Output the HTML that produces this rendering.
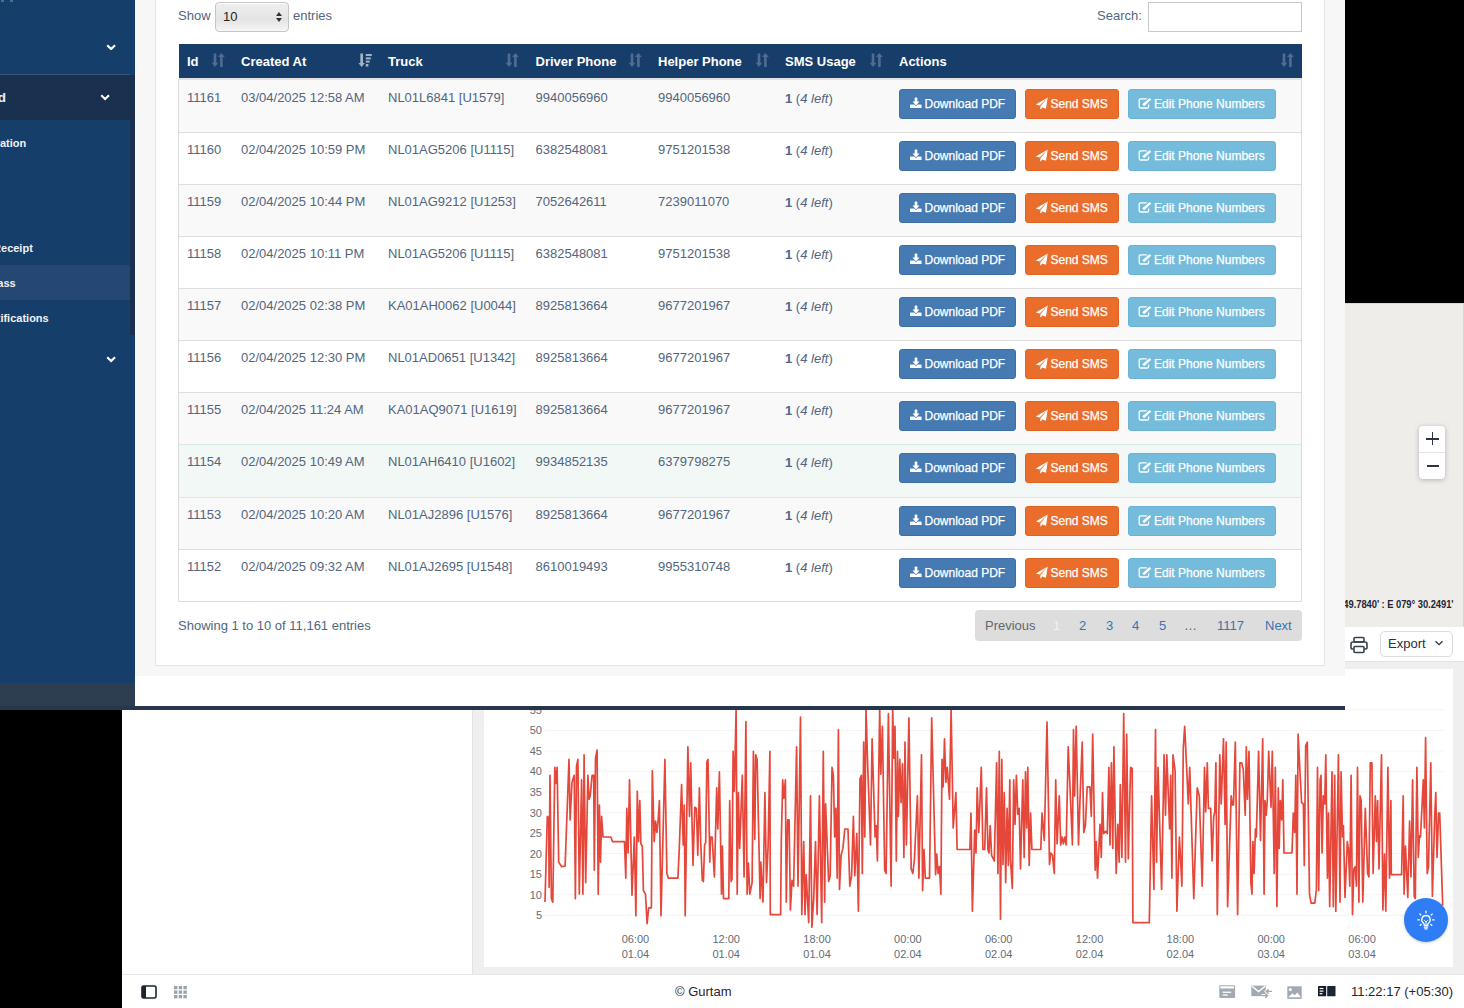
<!DOCTYPE html>
<html><head><meta charset="utf-8"><style>
*{margin:0;padding:0;box-sizing:border-box}
html,body{width:1464px;height:1008px;overflow:hidden;background:#000;font-family:"Liberation Sans",sans-serif}
.a{position:absolute}
.t{position:absolute;white-space:nowrap;line-height:1}
</style></head>
<body>
<div class="a" style="left:122px;top:303px;width:1342px;height:705px;background:#fff"></div>
<div class="a" style="left:1345px;top:303px;width:119px;height:324px;background:#eeede9;border-top:1px solid #d8d6d0"></div>
<div class="a" style="left:1463px;top:303px;width:1px;height:324px;background:#d9d8d4"></div>
<div class="a" style="left:1419px;top:426px;width:26px;height:53px;background:#fff;border-radius:4px;box-shadow:0 1px 5px rgba(0,0,0,.25)"></div>
<div class="a" style="left:1419px;top:452px;width:26px;height:1px;background:#e6e6e6"></div>
<div class="a" style="left:1426px;top:438px;width:13px;height:1.6px;background:#2b3440"></div>
<div class="a" style="left:1431.7px;top:432px;width:1.6px;height:13px;background:#2b3440"></div>
<div class="a" style="left:1427px;top:465px;width:12px;height:2px;background:#2b3440"></div>
<div class="t" style="right:10.5px;top:600px;font-size:10.2px;font-weight:bold;color:#1d2633;letter-spacing:-0.05px;transform:scaleX(0.92);transform-origin:right center">N 049° 49.7840' : E 079° 30.2491'</div>
<div class="a" style="left:1345px;top:627px;width:119px;height:35px;background:#fff;border-bottom:1px solid #e2e2e2"></div>
<svg class="a" style="left:1349px;top:635px" width="20" height="20" viewBox="0 0 20 20" fill="none" stroke="#3a4250" stroke-width="1.6">
<rect x="5" y="2.5" width="10" height="4.5" rx="1"/><path d="M4.5 14H3.5a1.5 1.5 0 0 1-1.5-1.5V9a2 2 0 0 1 2-2h12a2 2 0 0 1 2 2v3.5a1.5 1.5 0 0 1-1.5 1.5H15.5"/><rect x="5" y="11.5" width="10" height="6" rx="1"/></svg>
<div class="a" style="left:1380px;top:631px;width:73px;height:26px;border:1px solid #d9dbe0;border-radius:5px;background:#fff"></div>
<div class="t" style="left:1388px;top:637px;font-size:13px;color:#2a3039">Export</div>
<svg class="a" style="left:1434px;top:639px" width="10" height="8" viewBox="0 0 10 8"><path d="M1.5 2.2 5 5.6 8.5 2.2" fill="none" stroke="#2a3039" stroke-width="1.3"/></svg>
<div class="a" style="left:472px;top:662px;width:992px;height:312px;background:#efefef"></div>
<div class="a" style="left:472px;top:662px;width:1px;height:312px;background:#e2e2e2"></div>
<div class="a" style="left:484px;top:669px;width:969px;height:298px;background:#fff"></div>
<div class="a" style="left:122px;top:974px;width:1342px;height:34px;background:#fff;border-top:1px solid #e6e7ea"></div>
<svg class="a" style="left:0;top:0" width="1464" height="1008" viewBox="0 0 1464 1008"><rect x="545" y="914.80" width="898" height="1" fill="#f3f3f3"/><rect x="545" y="894.25" width="898" height="1" fill="#f3f3f3"/><rect x="545" y="873.70" width="898" height="1" fill="#f3f3f3"/><rect x="545" y="853.15" width="898" height="1" fill="#f3f3f3"/><rect x="545" y="832.60" width="898" height="1" fill="#f3f3f3"/><rect x="545" y="812.05" width="898" height="1" fill="#f3f3f3"/><rect x="545" y="791.50" width="898" height="1" fill="#f3f3f3"/><rect x="545" y="770.95" width="898" height="1" fill="#f3f3f3"/><rect x="545" y="750.40" width="898" height="1" fill="#f3f3f3"/><rect x="545" y="729.85" width="898" height="1" fill="#f3f3f3"/><rect x="545" y="709.30" width="898" height="1" fill="#f3f3f3"/><text x="542" y="919.30" text-anchor="end" font-family="Liberation Sans" font-size="11" fill="#666c76">5</text><text x="542" y="898.75" text-anchor="end" font-family="Liberation Sans" font-size="11" fill="#666c76">10</text><text x="542" y="878.20" text-anchor="end" font-family="Liberation Sans" font-size="11" fill="#666c76">15</text><text x="542" y="857.65" text-anchor="end" font-family="Liberation Sans" font-size="11" fill="#666c76">20</text><text x="542" y="837.10" text-anchor="end" font-family="Liberation Sans" font-size="11" fill="#666c76">25</text><text x="542" y="816.55" text-anchor="end" font-family="Liberation Sans" font-size="11" fill="#666c76">30</text><text x="542" y="796.00" text-anchor="end" font-family="Liberation Sans" font-size="11" fill="#666c76">35</text><text x="542" y="775.45" text-anchor="end" font-family="Liberation Sans" font-size="11" fill="#666c76">40</text><text x="542" y="754.90" text-anchor="end" font-family="Liberation Sans" font-size="11" fill="#666c76">45</text><text x="542" y="734.35" text-anchor="end" font-family="Liberation Sans" font-size="11" fill="#666c76">50</text><text x="542" y="713.80" text-anchor="end" font-family="Liberation Sans" font-size="11" fill="#666c76">55</text><text x="635.40" y="943" text-anchor="middle" font-family="Liberation Sans" font-size="11" fill="#666c76">06:00</text><text x="635.40" y="958" text-anchor="middle" font-family="Liberation Sans" font-size="11" fill="#666c76">01.04</text><text x="726.23" y="943" text-anchor="middle" font-family="Liberation Sans" font-size="11" fill="#666c76">12:00</text><text x="726.23" y="958" text-anchor="middle" font-family="Liberation Sans" font-size="11" fill="#666c76">01.04</text><text x="817.06" y="943" text-anchor="middle" font-family="Liberation Sans" font-size="11" fill="#666c76">18:00</text><text x="817.06" y="958" text-anchor="middle" font-family="Liberation Sans" font-size="11" fill="#666c76">01.04</text><text x="907.89" y="943" text-anchor="middle" font-family="Liberation Sans" font-size="11" fill="#666c76">00:00</text><text x="907.89" y="958" text-anchor="middle" font-family="Liberation Sans" font-size="11" fill="#666c76">02.04</text><text x="998.72" y="943" text-anchor="middle" font-family="Liberation Sans" font-size="11" fill="#666c76">06:00</text><text x="998.72" y="958" text-anchor="middle" font-family="Liberation Sans" font-size="11" fill="#666c76">02.04</text><text x="1089.55" y="943" text-anchor="middle" font-family="Liberation Sans" font-size="11" fill="#666c76">12:00</text><text x="1089.55" y="958" text-anchor="middle" font-family="Liberation Sans" font-size="11" fill="#666c76">02.04</text><text x="1180.38" y="943" text-anchor="middle" font-family="Liberation Sans" font-size="11" fill="#666c76">18:00</text><text x="1180.38" y="958" text-anchor="middle" font-family="Liberation Sans" font-size="11" fill="#666c76">02.04</text><text x="1271.21" y="943" text-anchor="middle" font-family="Liberation Sans" font-size="11" fill="#666c76">00:00</text><text x="1271.21" y="958" text-anchor="middle" font-family="Liberation Sans" font-size="11" fill="#666c76">03.04</text><text x="1362.04" y="943" text-anchor="middle" font-family="Liberation Sans" font-size="11" fill="#666c76">06:00</text><text x="1362.04" y="958" text-anchor="middle" font-family="Liberation Sans" font-size="11" fill="#666c76">03.04</text><path d="M545.0 902.1 L547.3 816.4 L548.7 817.6 L549.1 887.2 L550.0 775.3 L551.4 898.6 L552.8 902.1 L554.8 767.4 L556.0 783.3 L557.1 767.4 L558.7 862.1 L561.7 866.7 L565.1 866.2 L569.0 759.4 L570.1 819.9 L572.0 782.2 L574.2 775.3 L575.4 898.6 L576.5 766.2 L577.9 759.4 L579.3 894.1 L581.6 779.9 L582.9 894.1 L584.1 754.8 L585.7 882.6 L587.9 775.3 L589.1 799.3 L590.2 795.9 L592.1 775.3 L593.7 775.3 L594.3 870.1 L595.5 758.2 L597.1 750.2 L598.2 894.1 L599.4 805.0 L600.5 862.1 L601.6 816.4 L603.0 837.0 L610.8 837.0 L612.6 841.6 L624.5 841.6 L625.8 878.1 L626.8 808.4 L628.1 853.0 L629.5 779.9 L632.0 895.2 L634.3 837.0 L635.9 915.8 L637.3 791.3 L638.6 841.6 L639.8 800.5 L640.9 843.8 L642.3 846.1 L643.4 890.6 L645.5 894.1 L647.1 923.7 L648.7 907.8 L651.4 907.8 L652.3 770.8 L654.2 841.6 L655.5 821.0 L656.9 832.4 L658.3 818.7 L659.4 800.5 L661.0 915.8 L664.9 759.4 L666.9 873.5 L668.3 878.1 L677.9 878.1 L679.3 848.4 L681.6 784.5 L683.2 845.0 L684.3 805.0 L685.2 915.8 L687.9 746.8 L689.5 816.4 L690.7 762.8 L693.0 865.5 L694.8 807.3 L696.4 808.4 L697.8 855.3 L699.4 787.9 L700.7 841.6 L702.3 880.4 L703.4 881.5 L704.6 845.0 L705.7 842.7 L706.9 761.6 L708.0 759.4 L709.8 862.1 L710.5 837.0 L712.1 837.0 L714.4 876.9 L716.7 787.9 L717.8 829.0 L719.4 771.9 L721.5 894.1 L722.4 846.1 L723.5 898.6 L728.8 898.6 L729.7 800.5 L731.1 881.5 L732.0 879.2 L733.1 751.4 L734.3 791.3 L736.1 710.3 L737.2 894.1 L738.4 792.5 L739.7 848.4 L742.3 775.3 L744.1 876.9 L745.9 721.7 L747.1 894.1 L748.4 863.2 L749.8 894.1 L752.1 882.6 L753.4 751.4 L754.8 839.3 L755.7 754.8 L757.1 759.4 L760.1 898.6 L760.8 862.1 L763.0 902.1 L764.9 792.5 L766.5 882.6 L768.1 846.1 L769.9 751.4 L770.3 914.6 L780.6 914.6 L781.3 841.6 L782.7 779.9 L783.8 798.2 L785.4 779.9 L786.3 902.1 L787.7 819.9 L789.1 819.9 L790.4 910.0 L792.0 880.4 L793.6 886.1 L796.6 746.8 L798.0 886.1 L800.5 717.1 L801.8 914.6 L803.7 841.6 L805.0 914.6 L806.2 874.7 L808.7 922.6 L810.5 795.9 L811.9 927.2 L813.7 898.6 L815.5 841.6 L817.1 914.6 L819.4 795.9 L821.7 922.6 L823.3 751.4 L824.7 902.1 L825.6 803.9 L828.6 881.5 L830.2 875.8 L832.0 767.4 L833.4 775.3 L834.7 837.0 L835.9 808.4 L837.2 878.1 L838.4 729.7 L839.5 889.5 L841.1 855.3 L842.9 848.4 L844.8 829.0 L848.0 829.0 L849.8 886.1 L851.6 875.8 L853.4 816.4 L854.8 875.8 L856.8 833.6 L858.4 911.2 L860.0 778.8 L861.4 775.3 L862.3 873.5 L863.7 742.2 L864.8 837.0 L866.0 709.1 L867.8 768.5 L870.5 845.0 L872.1 738.8 L875.1 837.0 L876.3 825.6 L877.4 861.0 L879.7 709.1 L880.8 774.2 L882.4 726.3 L884.7 870.1 L886.1 873.5 L888.4 713.7 L891.1 886.1 L892.7 709.1 L893.8 758.2 L895.0 726.3 L896.3 861.0 L897.5 751.4 L898.4 816.4 L899.8 759.4 L901.1 802.7 L902.5 763.9 L903.9 857.5 L905.0 742.2 L906.4 845.0 L908.9 717.8 L911.2 868.9 L912.8 873.5 L914.4 859.8 L917.4 795.9 L918.9 878.1 L921.5 754.8 L922.6 890.6 L924.0 849.5 L925.3 878.1 L929.5 878.1 L931.7 717.8 L935.6 874.7 L936.8 854.1 L938.1 873.5 L939.5 866.7 L940.9 894.1 L942.0 759.4 L943.2 786.8 L944.5 738.8 L945.9 782.2 L947.3 767.4 L949.5 799.3 L951.1 709.1 L953.2 827.9 L955.9 792.5 L957.1 849.5 L969.9 849.5 L971.0 813.0 L972.4 911.2 L974.7 830.1 L976.0 853.0 L977.2 787.9 L978.8 832.4 L981.3 767.4 L982.9 849.5 L984.7 849.5 L986.5 787.9 L987.9 849.5 L989.0 853.0 L990.2 825.6 L991.6 855.3 L994.3 861.0 L996.6 762.8 L997.9 873.5 L999.3 751.4 L1000.5 919.2 L1001.8 759.4 L1003.0 864.4 L1004.3 792.5 L1005.7 882.6 L1007.1 808.4 L1008.4 865.5 L1009.8 779.9 L1010.5 859.8 L1012.3 888.4 L1013.7 779.9 L1015.0 824.4 L1016.4 775.3 L1017.8 814.2 L1019.2 808.4 L1020.5 868.9 L1022.8 779.9 L1024.2 857.5 L1025.5 771.9 L1026.7 827.9 L1027.8 767.4 L1029.2 865.5 L1030.6 813.0 L1031.9 849.5 L1040.8 849.5 L1042.0 813.0 L1044.3 840.4 L1047.0 722.1 L1049.5 864.4 L1050.7 853.0 L1052.5 855.3 L1054.3 873.5 L1055.7 779.9 L1057.1 843.8 L1059.3 795.9 L1060.7 845.0 L1062.1 837.0 L1063.4 843.8 L1064.8 837.0 L1066.2 845.0 L1068.2 746.8 L1070.1 789.0 L1072.4 845.0 L1073.5 729.7 L1074.6 795.9 L1076.2 726.3 L1078.5 845.0 L1080.3 791.3 L1082.2 742.2 L1083.8 832.4 L1085.4 825.6 L1087.2 786.8 L1089.9 786.8 L1091.3 816.4 L1092.7 734.2 L1095.2 870.1 L1096.3 841.6 L1097.5 878.1 L1100.0 824.4 L1101.3 857.5 L1102.5 792.5 L1103.6 833.6 L1105.5 831.3 L1107.3 833.6 L1108.9 767.4 L1110.0 845.0 L1111.4 762.8 L1112.8 848.4 L1113.9 746.8 L1116.2 873.5 L1117.8 824.4 L1119.2 862.1 L1120.3 784.5 L1121.9 857.5 L1123.7 713.7 L1125.5 862.1 L1126.7 734.2 L1128.3 858.7 L1130.6 767.4 L1132.2 768.5 L1132.9 922.6 L1149.3 922.6 L1151.6 795.9 L1153.9 889.5 L1155.5 729.7 L1156.6 862.1 L1158.0 767.4 L1161.6 889.5 L1164.1 754.8 L1165.5 815.3 L1166.8 754.8 L1169.6 829.0 L1170.7 775.3 L1171.9 878.1 L1173.0 754.8 L1175.1 770.8 L1176.9 911.2 L1179.4 837.0 L1181.9 886.1 L1183.3 747.9 L1184.7 726.3 L1188.3 803.9 L1189.7 767.4 L1193.8 898.6 L1197.2 787.9 L1199.3 795.9 L1202.2 886.1 L1204.5 767.4 L1205.7 811.9 L1207.3 762.8 L1208.4 808.4 L1210.7 808.4 L1212.1 861.0 L1213.7 816.4 L1214.8 811.9 L1215.9 762.8 L1217.3 914.6 L1219.8 754.8 L1221.2 803.9 L1223.5 738.8 L1225.1 824.4 L1226.2 742.2 L1227.6 906.6 L1231.2 795.9 L1232.4 805.0 L1233.5 805.0 L1235.3 742.2 L1237.6 914.6 L1239.9 762.8 L1241.7 762.8 L1243.3 769.6 L1245.2 815.3 L1246.3 746.8 L1247.4 799.3 L1249.0 751.4 L1250.9 882.6 L1252.0 894.1 L1252.9 841.6 L1254.1 873.5 L1255.4 829.0 L1256.3 837.0 L1258.6 751.4 L1260.5 840.4 L1262.7 738.8 L1264.1 894.1 L1265.0 800.5 L1266.2 815.3 L1267.3 800.5 L1268.7 751.4 L1271.0 807.3 L1272.3 751.4 L1274.2 873.5 L1275.3 767.4 L1276.9 906.6 L1278.3 787.9 L1279.2 848.4 L1280.3 800.5 L1281.7 819.9 L1282.8 779.9 L1284.0 853.0 L1292.0 853.0 L1293.3 813.0 L1294.7 832.4 L1295.8 775.3 L1297.0 894.1 L1298.1 734.2 L1299.7 766.2 L1301.6 802.7 L1303.4 803.9 L1304.3 865.5 L1305.7 745.7 L1307.3 742.2 L1309.5 894.1 L1311.1 903.2 L1314.8 903.2 L1316.4 889.5 L1317.5 767.4 L1318.7 890.6 L1320.1 779.9 L1321.0 775.3 L1322.1 853.0 L1323.3 795.9 L1324.7 803.9 L1325.8 754.8 L1327.4 878.1 L1328.5 813.0 L1329.7 906.6 L1332.0 771.9 L1333.3 906.6 L1334.7 775.3 L1335.8 911.2 L1338.4 754.8 L1340.0 902.1 L1341.1 771.9 L1342.5 837.0 L1343.4 825.6 L1345.0 897.5 L1347.3 841.6 L1348.4 848.4 L1349.8 886.1 L1351.1 775.3 L1352.5 914.6 L1353.9 868.9 L1355.3 866.7 L1356.4 886.1 L1357.5 767.4 L1358.9 902.1 L1360.0 795.9 L1361.2 800.5 L1362.8 902.1 L1365.3 808.4 L1367.6 873.5 L1368.9 876.9 L1370.3 762.8 L1371.9 762.8 L1373.1 873.5 L1375.3 795.9 L1376.5 841.6 L1377.6 800.5 L1379.0 868.9 L1381.5 754.8 L1382.9 910.0 L1384.5 854.1 L1385.8 911.2 L1387.9 767.4 L1389.5 878.1 L1390.9 800.5 L1391.3 874.7 L1401.6 874.7 L1403.2 795.9 L1404.1 894.1 L1405.5 846.1 L1407.8 897.5 L1409.6 821.0 L1411.0 876.9 L1412.6 779.9 L1414.2 896.3 L1415.3 898.6 L1416.9 767.4 L1418.3 857.5 L1419.4 835.8 L1420.5 837.0 L1423.3 779.9 L1424.4 827.9 L1425.6 737.7 L1427.2 873.5 L1428.5 866.7 L1430.8 762.8 L1432.4 896.3 L1434.7 816.4 L1435.8 792.5 L1437.0 857.5 L1438.6 813.0 L1439.7 813.0 L1442.7 905.5" fill="none" stroke="#e5473a" stroke-width="1.7" stroke-linejoin="round"/></svg>
<div class="a" style="left:1404px;top:898px;width:44px;height:44px;border-radius:50%;background:#2f7df4;box-shadow:0 1px 3px rgba(0,0,0,.2)"></div>
<svg class="a" style="left:1414px;top:907.5px" width="24" height="24" viewBox="0 0 24 24" fill="none" stroke="#fff" stroke-width="1.3" stroke-linecap="round"><path d="M12 7.5a4.2 4.2 0 0 0-2.6 7.5c.5.4.8 1 .8 1.6v.9h3.6v-.9c0-.6.3-1.2.8-1.6A4.2 4.2 0 0 0 12 7.5z"/><path d="M10.4 19.2h3.2M10.8 20.8h2.4"/><path d="M12 3.2v1.6M5.8 6l1.1 1.1M18.2 6l-1.1 1.1M3.8 11.8h1.6M18.6 11.8h1.6M6.2 17.3l1-.9M17.8 17.3l-1-.9"/><path d="M10.5 12.5l1.5 1.5 1.5-1.5M12 14v3" stroke-width="1"/></svg>
<svg class="a" style="left:141px;top:985px" width="16" height="14" viewBox="0 0 16 14"><rect x="1" y="1" width="14" height="12" rx="1.5" fill="none" stroke="#1c2433" stroke-width="1.6"/><rect x="1" y="1" width="4" height="12" fill="#1c2433"/></svg>
<svg class="a" style="left:174px;top:986px" width="14" height="13" viewBox="0 0 14 13" fill="#9ba1aa"><rect x="0.0" y="0.0" width="3.4" height="3.3"/><rect x="4.7" y="0.0" width="3.4" height="3.3"/><rect x="9.4" y="0.0" width="3.4" height="3.3"/><rect x="0.0" y="4.5" width="3.4" height="3.3"/><rect x="4.7" y="4.5" width="3.4" height="3.3"/><rect x="9.4" y="4.5" width="3.4" height="3.3"/><rect x="0.0" y="9.0" width="3.4" height="3.3"/><rect x="4.7" y="9.0" width="3.4" height="3.3"/><rect x="9.4" y="9.0" width="3.4" height="3.3"/></svg>
<div class="t" style="left:675px;top:985px;font-size:13px;color:#1f2633">© Gurtam</div>
<svg class="a" style="left:1219px;top:985px" width="17" height="14" viewBox="0 0 17 14"><rect x="0.3" y="0.2" width="15.8" height="12.9" rx="1" fill="#a3a9b2"/><rect x="1.3" y="1.3" width="13.8" height="2.2" rx="0.5" fill="#fff"/><rect x="3.7" y="6.6" width="8.5" height="1.3" fill="#fff"/><rect x="3.7" y="9.4" width="5" height="1.3" fill="#fff"/></svg>
<svg class="a" style="left:1250.5px;top:985px" width="22" height="14" viewBox="0 0 22 14"><rect x="0.3" y="0.6" width="14.5" height="10.5" fill="#a3a9b2"/><path d="M1 1.3 7.5 6.6 14.1 1.3" fill="none" stroke="#fff" stroke-width="1.4"/><path d="M21 6.4H15.8M17.6 4.3 15.3 6.4 17.6 8.5M10.6 10.6H16M14.2 8.5 16.5 10.6 14.2 12.7" fill="none" stroke="#fff" stroke-width="3"/><path d="M21 6.4H15.8M17.6 4.3 15.3 6.4 17.6 8.5M10.6 10.6H16M14.2 8.5 16.5 10.6 14.2 12.7" fill="none" stroke="#a3a9b2" stroke-width="1.4"/></svg>
<svg class="a" style="left:1287px;top:985.5px" width="15" height="13" viewBox="0 0 15 13"><rect x="0.3" y="0.3" width="14.4" height="12.6" fill="#a3a9b2"/><circle cx="3.3" cy="3.6" r="1.6" fill="#fff"/><path d="M1.2 11.2 5.4 7.3 7.8 9.2 10.4 6.5 13.8 11.2Z" fill="#fff"/></svg>
<svg class="a" style="left:1318px;top:986.3px" width="18" height="11" viewBox="0 0 18 11"><rect x="0" y="0" width="8.2" height="10.3" rx="0.6" fill="#151c29"/><rect x="9.2" y="0" width="8.3" height="10.3" rx="0.6" fill="#1c2433"/><rect x="1.6" y="1.9" width="3.8" height="1.2" fill="#fff"/><rect x="1.6" y="4.5" width="3.8" height="1.2" fill="#fff"/><rect x="1.6" y="7.1" width="2.8" height="1.2" fill="#fff"/></svg>
<div class="t" style="left:1351px;top:985px;font-size:13px;color:#1f2633">11:22:17 (+05:30)</div>
<div class="a" style="left:0;top:0;width:1345px;height:706px;background:#fff"></div>
<div class="a" style="left:0;top:706px;width:1345px;height:4px;background:#26374b"></div>
<div class="a" style="left:135px;top:0;width:1210px;height:676px;background:#f7f7f7"></div>
<div class="a" style="left:0;top:0;width:135px;height:683px;background:#163e6b"></div>
<div class="a" style="left:0;top:683px;width:135px;height:23px;background:#2e3e51"></div>
<div class="a" style="left:0;top:74px;width:130px;height:1px;background:#3b5778"></div>
<div class="a" style="left:0;top:75px;width:135px;height:45px;background:#19304f"></div>
<div class="a" style="left:130px;top:120px;width:5px;height:215px;background:#19304f"></div>
<div class="a" style="left:0;top:265px;width:130px;height:35px;background:#244873"></div>
<svg class="a" style="left:105.6px;top:43.6px" width="10.8" height="6.9" viewBox="0 0 10.8 6.9"><path d="M1.2 1.2 5.1 5.1 9.0 1.2" fill="none" stroke="#fff" stroke-width="2.1"/></svg>
<svg class="a" style="left:100.4px;top:94px" width="10.8" height="6.9" viewBox="0 0 10.8 6.9"><path d="M1.2 1.2 5.1 5.1 9.0 1.2" fill="none" stroke="#fff" stroke-width="2.1"/></svg>
<svg class="a" style="left:106px;top:356.3px" width="10.8" height="6.9" viewBox="0 0 10.8 6.9"><path d="M1.2 1.2 5.1 5.1 9.0 1.2" fill="none" stroke="#fff" stroke-width="2.1"/></svg>
<div class="t" style="right:1458px;top:90.8px;font-size:13.5px;font-weight:bold;color:#eef2f6">Dashboard</div>
<div class="a" style="left:1px;top:0;width:3px;height:1.5px;background:#4f6c8f"></div><div class="a" style="left:9.5px;top:0;width:3px;height:1.5px;background:#4f6c8f"></div>
<div class="t" style="right:1437.8px;top:138.0px;font-size:11px;font-weight:bold;color:#eef2f6">Registration</div>
<div class="t" style="right:1431.2px;top:243.0px;font-size:11px;font-weight:bold;color:#eef2f6">Delivery Receipt</div>
<div class="t" style="right:1448.3px;top:278.0px;font-size:11px;font-weight:bold;color:#eef2f6">Gate Pass</div>
<div class="t" style="right:1415.3px;top:313.0px;font-size:11px;font-weight:bold;color:#eef2f6">Notifications</div>
<div class="a" style="left:155px;top:-2px;width:1170px;height:668px;background:#fff;border:1px solid #e3e4ea"></div>
<div class="t" style="left:178px;top:9px;font-size:13px;color:#52667e">Show</div>
<div class="a" style="left:215px;top:2px;width:74px;height:30px;border:1px solid #c5c5c5;border-radius:4px;background:linear-gradient(#efefef,#e4e4e4 60%,#f6f6f6);box-shadow:inset 0 1px 0 #fff"></div>
<div class="t" style="left:223px;top:10px;font-size:13px;color:#222">10</div>
<svg class="a" style="left:276px;top:11px" width="6" height="12" viewBox="0 0 6 12"><path d="M0 5 3 1 6 5Z M0 7 3 11 6 7Z" fill="#333"/></svg>
<div class="t" style="left:293px;top:9px;font-size:13px;color:#52667e">entries</div>
<div class="t" style="left:1097px;top:9px;font-size:13px;color:#52667e">Search:</div>
<div class="a" style="left:1148px;top:2px;width:154px;height:30px;border:1px solid #c8c8c8;background:#fff"></div>
<div class="a" style="left:179px;top:44px;width:1123px;height:34px;background:#173e6a"></div>
<div class="a" style="left:178px;top:78px;width:1124px;height:2px;background:#e2e2e2"></div>
<div class="t" style="left:187px;top:55px;font-size:13px;font-weight:bold;color:#fff">Id</div>
<div class="t" style="left:241px;top:55px;font-size:13px;font-weight:bold;color:#fff">Created At</div>
<div class="t" style="left:388px;top:55px;font-size:13px;font-weight:bold;color:#fff">Truck</div>
<div class="t" style="left:535.5px;top:55px;font-size:13px;font-weight:bold;color:#fff">Driver Phone</div>
<div class="t" style="left:658px;top:55px;font-size:13px;font-weight:bold;color:#fff">Helper Phone</div>
<div class="t" style="left:785px;top:55px;font-size:13px;font-weight:bold;color:#fff">SMS Usage</div>
<div class="t" style="left:899px;top:55px;font-size:13px;font-weight:bold;color:#fff">Actions</div>
<svg class="a" style="left:211px;top:53px" width="14" height="14" viewBox="0 0 14 14" fill="#4f6d92"><rect x="2.7" y="0.5" width="2.6" height="10"/><path d="M0.7 9.8 7.3 9.8 4 14Z"/><path d="M7 4 13.8 4 10.4 0Z"/><rect x="9.1" y="3.8" width="2.6" height="10.2"/></svg>
<svg class="a" style="left:358px;top:53px" width="14" height="14" viewBox="0 0 14 14" fill="#a3b3c6"><rect x="2.3" y="0.5" width="2.7" height="10"/><path d="M0.4 10 6.9 10 3.65 14Z"/><rect x="7.8" y="1" width="6" height="2"/><rect x="7.8" y="4.4" width="5" height="2"/><rect x="7.8" y="7.6" width="3.8" height="2"/><rect x="7.8" y="11" width="2.6" height="2.6"/></svg>
<svg class="a" style="left:505px;top:53px" width="14" height="14" viewBox="0 0 14 14" fill="#4f6d92"><rect x="2.7" y="0.5" width="2.6" height="10"/><path d="M0.7 9.8 7.3 9.8 4 14Z"/><path d="M7 4 13.8 4 10.4 0Z"/><rect x="9.1" y="3.8" width="2.6" height="10.2"/></svg>
<svg class="a" style="left:628px;top:53px" width="14" height="14" viewBox="0 0 14 14" fill="#4f6d92"><rect x="2.7" y="0.5" width="2.6" height="10"/><path d="M0.7 9.8 7.3 9.8 4 14Z"/><path d="M7 4 13.8 4 10.4 0Z"/><rect x="9.1" y="3.8" width="2.6" height="10.2"/></svg>
<svg class="a" style="left:755px;top:53px" width="14" height="14" viewBox="0 0 14 14" fill="#4f6d92"><rect x="2.7" y="0.5" width="2.6" height="10"/><path d="M0.7 9.8 7.3 9.8 4 14Z"/><path d="M7 4 13.8 4 10.4 0Z"/><rect x="9.1" y="3.8" width="2.6" height="10.2"/></svg>
<svg class="a" style="left:869px;top:53px" width="14" height="14" viewBox="0 0 14 14" fill="#4f6d92"><rect x="2.7" y="0.5" width="2.6" height="10"/><path d="M0.7 9.8 7.3 9.8 4 14Z"/><path d="M7 4 13.8 4 10.4 0Z"/><rect x="9.1" y="3.8" width="2.6" height="10.2"/></svg>
<svg class="a" style="left:1280px;top:53px" width="14" height="14" viewBox="0 0 14 14" fill="#4f6d92"><rect x="2.7" y="0.5" width="2.6" height="10"/><path d="M0.7 9.8 7.3 9.8 4 14Z"/><path d="M7 4 13.8 4 10.4 0Z"/><rect x="9.1" y="3.8" width="2.6" height="10.2"/></svg>
<div class="a" style="left:178px;top:80px;width:1124px;height:522px;border:1px solid #dcdcdc;border-top:none;background:#fff"></div>
<div class="a" style="left:179px;top:80px;width:1122px;height:52px;background:#f9f9f9"></div>
<div class="t" style="left:187px;top:91px;font-size:13px;color:#52667e">11161</div>
<div class="t" style="left:241px;top:91px;font-size:13px;color:#52667e">03/04/2025 12:58 AM</div>
<div class="t" style="left:388px;top:91px;font-size:13px;color:#52667e">NL01L6841 [U1579]</div>
<div class="t" style="left:535.5px;top:91px;font-size:13px;color:#52667e">9940056960</div>
<div class="t" style="left:658px;top:91px;font-size:13px;color:#52667e">9940056960</div>
<div class="t" style="left:785px;top:92px;font-size:13px;color:#52667e"><b>1</b> (<i>4 left</i>)</div>
<div class="a" style="left:899px;top:89px;width:117px;height:30px;background:#457ab3;border-radius:3px;border:1px solid #3d6fa6"></div>
<div class="t" style="left:924.5px;top:98px;font-size:12px;color:#fff;-webkit-text-stroke:0.25px #fff">Download PDF</div>
<svg class="a" style="left:909.5px;top:97px" width="12" height="12" viewBox="0 0 12 12"><rect x="4.7" y="0.5" width="2.6" height="5" rx="0.8" fill="#fff"/><path d="M2.5 4.6 9.5 4.6 6 8.4Z" fill="#fff"/><path d="M0 8.2Q0 7.4 1 7.4H4.2L6 9.2 7.8 7.4H11Q11.6 7.4 11.6 8.2V11H0Z" fill="#fff"/></svg>
<div class="a" style="left:1025px;top:89px;width:94px;height:30px;background:#ea6d2c;border-radius:3px;border:1px solid #e0641f"></div>
<div class="t" style="left:1050.5px;top:98px;font-size:12px;color:#fff;-webkit-text-stroke:0.25px #fff">Send SMS</div>
<svg class="a" style="left:1035px;top:97px" width="14" height="14" viewBox="0 0 14 14" fill="#fff"><path d="M12.7 0.5 0.8 7.4 4.6 8.6Z"/><path d="M12.7 0.5 5.4 9.3 5.3 12.8 7.4 10.4 11 11.7Z"/></svg>
<div class="a" style="left:1128px;top:89px;width:148px;height:30px;background:#75bbdc;border-radius:3px;border:1px solid #6ab2d6"></div>
<div class="t" style="left:1154px;top:98px;font-size:12px;color:#fff;-webkit-text-stroke:0.25px #fff">Edit Phone Numbers</div>
<svg class="a" style="left:1138px;top:97px" width="14" height="13" viewBox="0 0 14 13"><path d="M8.8 1.8H2.8A1.6 1.6 0 0 0 1.2 3.4V9.4A1.6 1.6 0 0 0 2.8 11H9A1.6 1.6 0 0 0 10.6 9.4V7.6" fill="none" stroke="#fff" stroke-width="1.3"/><path d="M5.2 8.3 12.4 1.9" stroke="#fff" stroke-width="2.5"/></svg>
<div class="a" style="left:179px;top:132px;width:1122px;height:52px;background:#fff"></div>
<div class="a" style="left:179px;top:132px;width:1122px;height:1px;background:#dedede"></div>
<div class="t" style="left:187px;top:143px;font-size:13px;color:#52667e">11160</div>
<div class="t" style="left:241px;top:143px;font-size:13px;color:#52667e">02/04/2025 10:59 PM</div>
<div class="t" style="left:388px;top:143px;font-size:13px;color:#52667e">NL01AG5206 [U1115]</div>
<div class="t" style="left:535.5px;top:143px;font-size:13px;color:#52667e">6382548081</div>
<div class="t" style="left:658px;top:143px;font-size:13px;color:#52667e">9751201538</div>
<div class="t" style="left:785px;top:144px;font-size:13px;color:#52667e"><b>1</b> (<i>4 left</i>)</div>
<div class="a" style="left:899px;top:141px;width:117px;height:30px;background:#457ab3;border-radius:3px;border:1px solid #3d6fa6"></div>
<div class="t" style="left:924.5px;top:150px;font-size:12px;color:#fff;-webkit-text-stroke:0.25px #fff">Download PDF</div>
<svg class="a" style="left:909.5px;top:149px" width="12" height="12" viewBox="0 0 12 12"><rect x="4.7" y="0.5" width="2.6" height="5" rx="0.8" fill="#fff"/><path d="M2.5 4.6 9.5 4.6 6 8.4Z" fill="#fff"/><path d="M0 8.2Q0 7.4 1 7.4H4.2L6 9.2 7.8 7.4H11Q11.6 7.4 11.6 8.2V11H0Z" fill="#fff"/></svg>
<div class="a" style="left:1025px;top:141px;width:94px;height:30px;background:#ea6d2c;border-radius:3px;border:1px solid #e0641f"></div>
<div class="t" style="left:1050.5px;top:150px;font-size:12px;color:#fff;-webkit-text-stroke:0.25px #fff">Send SMS</div>
<svg class="a" style="left:1035px;top:149px" width="14" height="14" viewBox="0 0 14 14" fill="#fff"><path d="M12.7 0.5 0.8 7.4 4.6 8.6Z"/><path d="M12.7 0.5 5.4 9.3 5.3 12.8 7.4 10.4 11 11.7Z"/></svg>
<div class="a" style="left:1128px;top:141px;width:148px;height:30px;background:#75bbdc;border-radius:3px;border:1px solid #6ab2d6"></div>
<div class="t" style="left:1154px;top:150px;font-size:12px;color:#fff;-webkit-text-stroke:0.25px #fff">Edit Phone Numbers</div>
<svg class="a" style="left:1138px;top:149px" width="14" height="13" viewBox="0 0 14 13"><path d="M8.8 1.8H2.8A1.6 1.6 0 0 0 1.2 3.4V9.4A1.6 1.6 0 0 0 2.8 11H9A1.6 1.6 0 0 0 10.6 9.4V7.6" fill="none" stroke="#fff" stroke-width="1.3"/><path d="M5.2 8.3 12.4 1.9" stroke="#fff" stroke-width="2.5"/></svg>
<div class="a" style="left:179px;top:184px;width:1122px;height:52px;background:#f9f9f9"></div>
<div class="a" style="left:179px;top:184px;width:1122px;height:1px;background:#dedede"></div>
<div class="t" style="left:187px;top:195px;font-size:13px;color:#52667e">11159</div>
<div class="t" style="left:241px;top:195px;font-size:13px;color:#52667e">02/04/2025 10:44 PM</div>
<div class="t" style="left:388px;top:195px;font-size:13px;color:#52667e">NL01AG9212 [U1253]</div>
<div class="t" style="left:535.5px;top:195px;font-size:13px;color:#52667e">7052642611</div>
<div class="t" style="left:658px;top:195px;font-size:13px;color:#52667e">7239011070</div>
<div class="t" style="left:785px;top:196px;font-size:13px;color:#52667e"><b>1</b> (<i>4 left</i>)</div>
<div class="a" style="left:899px;top:193px;width:117px;height:30px;background:#457ab3;border-radius:3px;border:1px solid #3d6fa6"></div>
<div class="t" style="left:924.5px;top:202px;font-size:12px;color:#fff;-webkit-text-stroke:0.25px #fff">Download PDF</div>
<svg class="a" style="left:909.5px;top:201px" width="12" height="12" viewBox="0 0 12 12"><rect x="4.7" y="0.5" width="2.6" height="5" rx="0.8" fill="#fff"/><path d="M2.5 4.6 9.5 4.6 6 8.4Z" fill="#fff"/><path d="M0 8.2Q0 7.4 1 7.4H4.2L6 9.2 7.8 7.4H11Q11.6 7.4 11.6 8.2V11H0Z" fill="#fff"/></svg>
<div class="a" style="left:1025px;top:193px;width:94px;height:30px;background:#ea6d2c;border-radius:3px;border:1px solid #e0641f"></div>
<div class="t" style="left:1050.5px;top:202px;font-size:12px;color:#fff;-webkit-text-stroke:0.25px #fff">Send SMS</div>
<svg class="a" style="left:1035px;top:201px" width="14" height="14" viewBox="0 0 14 14" fill="#fff"><path d="M12.7 0.5 0.8 7.4 4.6 8.6Z"/><path d="M12.7 0.5 5.4 9.3 5.3 12.8 7.4 10.4 11 11.7Z"/></svg>
<div class="a" style="left:1128px;top:193px;width:148px;height:30px;background:#75bbdc;border-radius:3px;border:1px solid #6ab2d6"></div>
<div class="t" style="left:1154px;top:202px;font-size:12px;color:#fff;-webkit-text-stroke:0.25px #fff">Edit Phone Numbers</div>
<svg class="a" style="left:1138px;top:201px" width="14" height="13" viewBox="0 0 14 13"><path d="M8.8 1.8H2.8A1.6 1.6 0 0 0 1.2 3.4V9.4A1.6 1.6 0 0 0 2.8 11H9A1.6 1.6 0 0 0 10.6 9.4V7.6" fill="none" stroke="#fff" stroke-width="1.3"/><path d="M5.2 8.3 12.4 1.9" stroke="#fff" stroke-width="2.5"/></svg>
<div class="a" style="left:179px;top:236px;width:1122px;height:52px;background:#fff"></div>
<div class="a" style="left:179px;top:236px;width:1122px;height:1px;background:#dedede"></div>
<div class="t" style="left:187px;top:247px;font-size:13px;color:#52667e">11158</div>
<div class="t" style="left:241px;top:247px;font-size:13px;color:#52667e">02/04/2025 10:11 PM</div>
<div class="t" style="left:388px;top:247px;font-size:13px;color:#52667e">NL01AG5206 [U1115]</div>
<div class="t" style="left:535.5px;top:247px;font-size:13px;color:#52667e">6382548081</div>
<div class="t" style="left:658px;top:247px;font-size:13px;color:#52667e">9751201538</div>
<div class="t" style="left:785px;top:248px;font-size:13px;color:#52667e"><b>1</b> (<i>4 left</i>)</div>
<div class="a" style="left:899px;top:245px;width:117px;height:30px;background:#457ab3;border-radius:3px;border:1px solid #3d6fa6"></div>
<div class="t" style="left:924.5px;top:254px;font-size:12px;color:#fff;-webkit-text-stroke:0.25px #fff">Download PDF</div>
<svg class="a" style="left:909.5px;top:253px" width="12" height="12" viewBox="0 0 12 12"><rect x="4.7" y="0.5" width="2.6" height="5" rx="0.8" fill="#fff"/><path d="M2.5 4.6 9.5 4.6 6 8.4Z" fill="#fff"/><path d="M0 8.2Q0 7.4 1 7.4H4.2L6 9.2 7.8 7.4H11Q11.6 7.4 11.6 8.2V11H0Z" fill="#fff"/></svg>
<div class="a" style="left:1025px;top:245px;width:94px;height:30px;background:#ea6d2c;border-radius:3px;border:1px solid #e0641f"></div>
<div class="t" style="left:1050.5px;top:254px;font-size:12px;color:#fff;-webkit-text-stroke:0.25px #fff">Send SMS</div>
<svg class="a" style="left:1035px;top:253px" width="14" height="14" viewBox="0 0 14 14" fill="#fff"><path d="M12.7 0.5 0.8 7.4 4.6 8.6Z"/><path d="M12.7 0.5 5.4 9.3 5.3 12.8 7.4 10.4 11 11.7Z"/></svg>
<div class="a" style="left:1128px;top:245px;width:148px;height:30px;background:#75bbdc;border-radius:3px;border:1px solid #6ab2d6"></div>
<div class="t" style="left:1154px;top:254px;font-size:12px;color:#fff;-webkit-text-stroke:0.25px #fff">Edit Phone Numbers</div>
<svg class="a" style="left:1138px;top:253px" width="14" height="13" viewBox="0 0 14 13"><path d="M8.8 1.8H2.8A1.6 1.6 0 0 0 1.2 3.4V9.4A1.6 1.6 0 0 0 2.8 11H9A1.6 1.6 0 0 0 10.6 9.4V7.6" fill="none" stroke="#fff" stroke-width="1.3"/><path d="M5.2 8.3 12.4 1.9" stroke="#fff" stroke-width="2.5"/></svg>
<div class="a" style="left:179px;top:288px;width:1122px;height:52px;background:#f9f9f9"></div>
<div class="a" style="left:179px;top:288px;width:1122px;height:1px;background:#dedede"></div>
<div class="t" style="left:187px;top:299px;font-size:13px;color:#52667e">11157</div>
<div class="t" style="left:241px;top:299px;font-size:13px;color:#52667e">02/04/2025 02:38 PM</div>
<div class="t" style="left:388px;top:299px;font-size:13px;color:#52667e">KA01AH0062 [U0044]</div>
<div class="t" style="left:535.5px;top:299px;font-size:13px;color:#52667e">8925813664</div>
<div class="t" style="left:658px;top:299px;font-size:13px;color:#52667e">9677201967</div>
<div class="t" style="left:785px;top:300px;font-size:13px;color:#52667e"><b>1</b> (<i>4 left</i>)</div>
<div class="a" style="left:899px;top:297px;width:117px;height:30px;background:#457ab3;border-radius:3px;border:1px solid #3d6fa6"></div>
<div class="t" style="left:924.5px;top:306px;font-size:12px;color:#fff;-webkit-text-stroke:0.25px #fff">Download PDF</div>
<svg class="a" style="left:909.5px;top:305px" width="12" height="12" viewBox="0 0 12 12"><rect x="4.7" y="0.5" width="2.6" height="5" rx="0.8" fill="#fff"/><path d="M2.5 4.6 9.5 4.6 6 8.4Z" fill="#fff"/><path d="M0 8.2Q0 7.4 1 7.4H4.2L6 9.2 7.8 7.4H11Q11.6 7.4 11.6 8.2V11H0Z" fill="#fff"/></svg>
<div class="a" style="left:1025px;top:297px;width:94px;height:30px;background:#ea6d2c;border-radius:3px;border:1px solid #e0641f"></div>
<div class="t" style="left:1050.5px;top:306px;font-size:12px;color:#fff;-webkit-text-stroke:0.25px #fff">Send SMS</div>
<svg class="a" style="left:1035px;top:305px" width="14" height="14" viewBox="0 0 14 14" fill="#fff"><path d="M12.7 0.5 0.8 7.4 4.6 8.6Z"/><path d="M12.7 0.5 5.4 9.3 5.3 12.8 7.4 10.4 11 11.7Z"/></svg>
<div class="a" style="left:1128px;top:297px;width:148px;height:30px;background:#75bbdc;border-radius:3px;border:1px solid #6ab2d6"></div>
<div class="t" style="left:1154px;top:306px;font-size:12px;color:#fff;-webkit-text-stroke:0.25px #fff">Edit Phone Numbers</div>
<svg class="a" style="left:1138px;top:305px" width="14" height="13" viewBox="0 0 14 13"><path d="M8.8 1.8H2.8A1.6 1.6 0 0 0 1.2 3.4V9.4A1.6 1.6 0 0 0 2.8 11H9A1.6 1.6 0 0 0 10.6 9.4V7.6" fill="none" stroke="#fff" stroke-width="1.3"/><path d="M5.2 8.3 12.4 1.9" stroke="#fff" stroke-width="2.5"/></svg>
<div class="a" style="left:179px;top:340px;width:1122px;height:52px;background:#fff"></div>
<div class="a" style="left:179px;top:340px;width:1122px;height:1px;background:#dedede"></div>
<div class="t" style="left:187px;top:351px;font-size:13px;color:#52667e">11156</div>
<div class="t" style="left:241px;top:351px;font-size:13px;color:#52667e">02/04/2025 12:30 PM</div>
<div class="t" style="left:388px;top:351px;font-size:13px;color:#52667e">NL01AD0651 [U1342]</div>
<div class="t" style="left:535.5px;top:351px;font-size:13px;color:#52667e">8925813664</div>
<div class="t" style="left:658px;top:351px;font-size:13px;color:#52667e">9677201967</div>
<div class="t" style="left:785px;top:352px;font-size:13px;color:#52667e"><b>1</b> (<i>4 left</i>)</div>
<div class="a" style="left:899px;top:349px;width:117px;height:30px;background:#457ab3;border-radius:3px;border:1px solid #3d6fa6"></div>
<div class="t" style="left:924.5px;top:358px;font-size:12px;color:#fff;-webkit-text-stroke:0.25px #fff">Download PDF</div>
<svg class="a" style="left:909.5px;top:357px" width="12" height="12" viewBox="0 0 12 12"><rect x="4.7" y="0.5" width="2.6" height="5" rx="0.8" fill="#fff"/><path d="M2.5 4.6 9.5 4.6 6 8.4Z" fill="#fff"/><path d="M0 8.2Q0 7.4 1 7.4H4.2L6 9.2 7.8 7.4H11Q11.6 7.4 11.6 8.2V11H0Z" fill="#fff"/></svg>
<div class="a" style="left:1025px;top:349px;width:94px;height:30px;background:#ea6d2c;border-radius:3px;border:1px solid #e0641f"></div>
<div class="t" style="left:1050.5px;top:358px;font-size:12px;color:#fff;-webkit-text-stroke:0.25px #fff">Send SMS</div>
<svg class="a" style="left:1035px;top:357px" width="14" height="14" viewBox="0 0 14 14" fill="#fff"><path d="M12.7 0.5 0.8 7.4 4.6 8.6Z"/><path d="M12.7 0.5 5.4 9.3 5.3 12.8 7.4 10.4 11 11.7Z"/></svg>
<div class="a" style="left:1128px;top:349px;width:148px;height:30px;background:#75bbdc;border-radius:3px;border:1px solid #6ab2d6"></div>
<div class="t" style="left:1154px;top:358px;font-size:12px;color:#fff;-webkit-text-stroke:0.25px #fff">Edit Phone Numbers</div>
<svg class="a" style="left:1138px;top:357px" width="14" height="13" viewBox="0 0 14 13"><path d="M8.8 1.8H2.8A1.6 1.6 0 0 0 1.2 3.4V9.4A1.6 1.6 0 0 0 2.8 11H9A1.6 1.6 0 0 0 10.6 9.4V7.6" fill="none" stroke="#fff" stroke-width="1.3"/><path d="M5.2 8.3 12.4 1.9" stroke="#fff" stroke-width="2.5"/></svg>
<div class="a" style="left:179px;top:392px;width:1122px;height:52px;background:#f9f9f9"></div>
<div class="a" style="left:179px;top:392px;width:1122px;height:1px;background:#dedede"></div>
<div class="t" style="left:187px;top:403px;font-size:13px;color:#52667e">11155</div>
<div class="t" style="left:241px;top:403px;font-size:13px;color:#52667e">02/04/2025 11:24 AM</div>
<div class="t" style="left:388px;top:403px;font-size:13px;color:#52667e">KA01AQ9071 [U1619]</div>
<div class="t" style="left:535.5px;top:403px;font-size:13px;color:#52667e">8925813664</div>
<div class="t" style="left:658px;top:403px;font-size:13px;color:#52667e">9677201967</div>
<div class="t" style="left:785px;top:404px;font-size:13px;color:#52667e"><b>1</b> (<i>4 left</i>)</div>
<div class="a" style="left:899px;top:401px;width:117px;height:30px;background:#457ab3;border-radius:3px;border:1px solid #3d6fa6"></div>
<div class="t" style="left:924.5px;top:410px;font-size:12px;color:#fff;-webkit-text-stroke:0.25px #fff">Download PDF</div>
<svg class="a" style="left:909.5px;top:409px" width="12" height="12" viewBox="0 0 12 12"><rect x="4.7" y="0.5" width="2.6" height="5" rx="0.8" fill="#fff"/><path d="M2.5 4.6 9.5 4.6 6 8.4Z" fill="#fff"/><path d="M0 8.2Q0 7.4 1 7.4H4.2L6 9.2 7.8 7.4H11Q11.6 7.4 11.6 8.2V11H0Z" fill="#fff"/></svg>
<div class="a" style="left:1025px;top:401px;width:94px;height:30px;background:#ea6d2c;border-radius:3px;border:1px solid #e0641f"></div>
<div class="t" style="left:1050.5px;top:410px;font-size:12px;color:#fff;-webkit-text-stroke:0.25px #fff">Send SMS</div>
<svg class="a" style="left:1035px;top:409px" width="14" height="14" viewBox="0 0 14 14" fill="#fff"><path d="M12.7 0.5 0.8 7.4 4.6 8.6Z"/><path d="M12.7 0.5 5.4 9.3 5.3 12.8 7.4 10.4 11 11.7Z"/></svg>
<div class="a" style="left:1128px;top:401px;width:148px;height:30px;background:#75bbdc;border-radius:3px;border:1px solid #6ab2d6"></div>
<div class="t" style="left:1154px;top:410px;font-size:12px;color:#fff;-webkit-text-stroke:0.25px #fff">Edit Phone Numbers</div>
<svg class="a" style="left:1138px;top:409px" width="14" height="13" viewBox="0 0 14 13"><path d="M8.8 1.8H2.8A1.6 1.6 0 0 0 1.2 3.4V9.4A1.6 1.6 0 0 0 2.8 11H9A1.6 1.6 0 0 0 10.6 9.4V7.6" fill="none" stroke="#fff" stroke-width="1.3"/><path d="M5.2 8.3 12.4 1.9" stroke="#fff" stroke-width="2.5"/></svg>
<div class="a" style="left:179px;top:444px;width:1122px;height:53px;background:#f2f8f6"></div>
<div class="a" style="left:179px;top:444px;width:1122px;height:1px;background:#d8e8e4"></div>
<div class="t" style="left:187px;top:455px;font-size:13px;color:#52667e">11154</div>
<div class="t" style="left:241px;top:455px;font-size:13px;color:#52667e">02/04/2025 10:49 AM</div>
<div class="t" style="left:388px;top:455px;font-size:13px;color:#52667e">NL01AH6410 [U1602]</div>
<div class="t" style="left:535.5px;top:455px;font-size:13px;color:#52667e">9934852135</div>
<div class="t" style="left:658px;top:455px;font-size:13px;color:#52667e">6379798275</div>
<div class="t" style="left:785px;top:456px;font-size:13px;color:#52667e"><b>1</b> (<i>4 left</i>)</div>
<div class="a" style="left:899px;top:453px;width:117px;height:30px;background:#457ab3;border-radius:3px;border:1px solid #3d6fa6"></div>
<div class="t" style="left:924.5px;top:462px;font-size:12px;color:#fff;-webkit-text-stroke:0.25px #fff">Download PDF</div>
<svg class="a" style="left:909.5px;top:461px" width="12" height="12" viewBox="0 0 12 12"><rect x="4.7" y="0.5" width="2.6" height="5" rx="0.8" fill="#fff"/><path d="M2.5 4.6 9.5 4.6 6 8.4Z" fill="#fff"/><path d="M0 8.2Q0 7.4 1 7.4H4.2L6 9.2 7.8 7.4H11Q11.6 7.4 11.6 8.2V11H0Z" fill="#fff"/></svg>
<div class="a" style="left:1025px;top:453px;width:94px;height:30px;background:#ea6d2c;border-radius:3px;border:1px solid #e0641f"></div>
<div class="t" style="left:1050.5px;top:462px;font-size:12px;color:#fff;-webkit-text-stroke:0.25px #fff">Send SMS</div>
<svg class="a" style="left:1035px;top:461px" width="14" height="14" viewBox="0 0 14 14" fill="#fff"><path d="M12.7 0.5 0.8 7.4 4.6 8.6Z"/><path d="M12.7 0.5 5.4 9.3 5.3 12.8 7.4 10.4 11 11.7Z"/></svg>
<div class="a" style="left:1128px;top:453px;width:148px;height:30px;background:#75bbdc;border-radius:3px;border:1px solid #6ab2d6"></div>
<div class="t" style="left:1154px;top:462px;font-size:12px;color:#fff;-webkit-text-stroke:0.25px #fff">Edit Phone Numbers</div>
<svg class="a" style="left:1138px;top:461px" width="14" height="13" viewBox="0 0 14 13"><path d="M8.8 1.8H2.8A1.6 1.6 0 0 0 1.2 3.4V9.4A1.6 1.6 0 0 0 2.8 11H9A1.6 1.6 0 0 0 10.6 9.4V7.6" fill="none" stroke="#fff" stroke-width="1.3"/><path d="M5.2 8.3 12.4 1.9" stroke="#fff" stroke-width="2.5"/></svg>
<div class="a" style="left:179px;top:497px;width:1122px;height:52px;background:#f9f9f9"></div>
<div class="a" style="left:179px;top:497px;width:1122px;height:1px;background:#d8e8e4"></div>
<div class="t" style="left:187px;top:508px;font-size:13px;color:#52667e">11153</div>
<div class="t" style="left:241px;top:508px;font-size:13px;color:#52667e">02/04/2025 10:20 AM</div>
<div class="t" style="left:388px;top:508px;font-size:13px;color:#52667e">NL01AJ2896 [U1576]</div>
<div class="t" style="left:535.5px;top:508px;font-size:13px;color:#52667e">8925813664</div>
<div class="t" style="left:658px;top:508px;font-size:13px;color:#52667e">9677201967</div>
<div class="t" style="left:785px;top:509px;font-size:13px;color:#52667e"><b>1</b> (<i>4 left</i>)</div>
<div class="a" style="left:899px;top:506px;width:117px;height:30px;background:#457ab3;border-radius:3px;border:1px solid #3d6fa6"></div>
<div class="t" style="left:924.5px;top:515px;font-size:12px;color:#fff;-webkit-text-stroke:0.25px #fff">Download PDF</div>
<svg class="a" style="left:909.5px;top:514px" width="12" height="12" viewBox="0 0 12 12"><rect x="4.7" y="0.5" width="2.6" height="5" rx="0.8" fill="#fff"/><path d="M2.5 4.6 9.5 4.6 6 8.4Z" fill="#fff"/><path d="M0 8.2Q0 7.4 1 7.4H4.2L6 9.2 7.8 7.4H11Q11.6 7.4 11.6 8.2V11H0Z" fill="#fff"/></svg>
<div class="a" style="left:1025px;top:506px;width:94px;height:30px;background:#ea6d2c;border-radius:3px;border:1px solid #e0641f"></div>
<div class="t" style="left:1050.5px;top:515px;font-size:12px;color:#fff;-webkit-text-stroke:0.25px #fff">Send SMS</div>
<svg class="a" style="left:1035px;top:514px" width="14" height="14" viewBox="0 0 14 14" fill="#fff"><path d="M12.7 0.5 0.8 7.4 4.6 8.6Z"/><path d="M12.7 0.5 5.4 9.3 5.3 12.8 7.4 10.4 11 11.7Z"/></svg>
<div class="a" style="left:1128px;top:506px;width:148px;height:30px;background:#75bbdc;border-radius:3px;border:1px solid #6ab2d6"></div>
<div class="t" style="left:1154px;top:515px;font-size:12px;color:#fff;-webkit-text-stroke:0.25px #fff">Edit Phone Numbers</div>
<svg class="a" style="left:1138px;top:514px" width="14" height="13" viewBox="0 0 14 13"><path d="M8.8 1.8H2.8A1.6 1.6 0 0 0 1.2 3.4V9.4A1.6 1.6 0 0 0 2.8 11H9A1.6 1.6 0 0 0 10.6 9.4V7.6" fill="none" stroke="#fff" stroke-width="1.3"/><path d="M5.2 8.3 12.4 1.9" stroke="#fff" stroke-width="2.5"/></svg>
<div class="a" style="left:179px;top:549px;width:1122px;height:52px;background:#fff"></div>
<div class="a" style="left:179px;top:549px;width:1122px;height:1px;background:#dedede"></div>
<div class="t" style="left:187px;top:560px;font-size:13px;color:#52667e">11152</div>
<div class="t" style="left:241px;top:560px;font-size:13px;color:#52667e">02/04/2025 09:32 AM</div>
<div class="t" style="left:388px;top:560px;font-size:13px;color:#52667e">NL01AJ2695 [U1548]</div>
<div class="t" style="left:535.5px;top:560px;font-size:13px;color:#52667e">8610019493</div>
<div class="t" style="left:658px;top:560px;font-size:13px;color:#52667e">9955310748</div>
<div class="t" style="left:785px;top:561px;font-size:13px;color:#52667e"><b>1</b> (<i>4 left</i>)</div>
<div class="a" style="left:899px;top:558px;width:117px;height:30px;background:#457ab3;border-radius:3px;border:1px solid #3d6fa6"></div>
<div class="t" style="left:924.5px;top:567px;font-size:12px;color:#fff;-webkit-text-stroke:0.25px #fff">Download PDF</div>
<svg class="a" style="left:909.5px;top:566px" width="12" height="12" viewBox="0 0 12 12"><rect x="4.7" y="0.5" width="2.6" height="5" rx="0.8" fill="#fff"/><path d="M2.5 4.6 9.5 4.6 6 8.4Z" fill="#fff"/><path d="M0 8.2Q0 7.4 1 7.4H4.2L6 9.2 7.8 7.4H11Q11.6 7.4 11.6 8.2V11H0Z" fill="#fff"/></svg>
<div class="a" style="left:1025px;top:558px;width:94px;height:30px;background:#ea6d2c;border-radius:3px;border:1px solid #e0641f"></div>
<div class="t" style="left:1050.5px;top:567px;font-size:12px;color:#fff;-webkit-text-stroke:0.25px #fff">Send SMS</div>
<svg class="a" style="left:1035px;top:566px" width="14" height="14" viewBox="0 0 14 14" fill="#fff"><path d="M12.7 0.5 0.8 7.4 4.6 8.6Z"/><path d="M12.7 0.5 5.4 9.3 5.3 12.8 7.4 10.4 11 11.7Z"/></svg>
<div class="a" style="left:1128px;top:558px;width:148px;height:30px;background:#75bbdc;border-radius:3px;border:1px solid #6ab2d6"></div>
<div class="t" style="left:1154px;top:567px;font-size:12px;color:#fff;-webkit-text-stroke:0.25px #fff">Edit Phone Numbers</div>
<svg class="a" style="left:1138px;top:566px" width="14" height="13" viewBox="0 0 14 13"><path d="M8.8 1.8H2.8A1.6 1.6 0 0 0 1.2 3.4V9.4A1.6 1.6 0 0 0 2.8 11H9A1.6 1.6 0 0 0 10.6 9.4V7.6" fill="none" stroke="#fff" stroke-width="1.3"/><path d="M5.2 8.3 12.4 1.9" stroke="#fff" stroke-width="2.5"/></svg>
<div class="t" style="left:178px;top:619px;font-size:13px;color:#52667e">Showing 1 to 10 of 11,161 entries</div>
<div class="a" style="left:975px;top:610px;width:327px;height:31px;background:#dddddd;border-radius:4px"></div>
<div class="t" style="left:985px;top:619px;font-size:13px;color:#666">Previous</div>
<div class="t" style="left:1053px;top:619px;font-size:13px;color:#f2f2f2">1</div>
<div class="t" style="left:1079px;top:619px;font-size:13px;color:#3a74b0">2</div>
<div class="t" style="left:1106px;top:619px;font-size:13px;color:#3a74b0">3</div>
<div class="t" style="left:1132px;top:619px;font-size:13px;color:#3a74b0">4</div>
<div class="t" style="left:1159px;top:619px;font-size:13px;color:#3a74b0">5</div>
<div class="t" style="left:1184px;top:619px;font-size:13px;color:#666">…</div>
<div class="t" style="left:1217px;top:619px;font-size:13px;color:#3a74b0">1117</div>
<div class="t" style="left:1265px;top:619px;font-size:13px;color:#3a74b0">Next</div>
</body></html>
